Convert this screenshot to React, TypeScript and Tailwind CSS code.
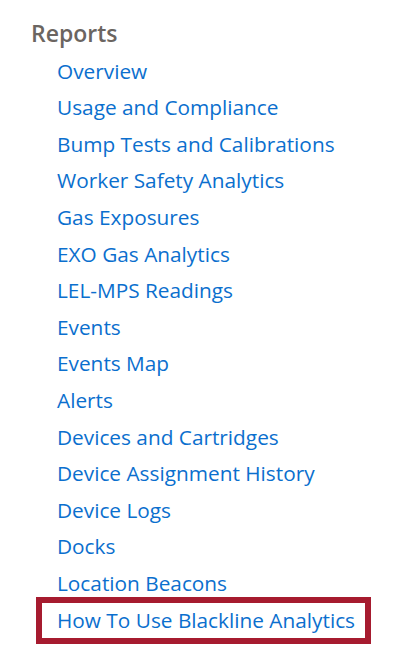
import React from 'react';

const reports = [
    'Overview',
    'Usage and Compliance',
    'Bump Tests and Calibrations',
    'Worker Safety Analytics',
    'Gas Exposures',
    'EXO Gas Analytics',
    'LEL-MPS Readings',
    'Events',
    'Events Map',
    'Alerts',
    'Devices and Cartridges',
    'Device Assignment History',
    'Device Logs',
    'Docks',
    'Location Beacons',
];

export default function App() {
    return (
        <div className="min-h-screen bg-white pt-[17px] pl-[31px]" style={{ fontFamily: '"Open Sans", "Noto Sans", sans-serif' }}>
            <h2 className="text-[23px] leading-[32px] font-semibold text-[#6b6561]">Reports</h2>
            <ul className="mt-[4px]">
                {reports.map((name) => (
                    <li key={name} className="pl-[26px] h-[36.6px] flex items-center">
                        <a href="#" className="text-[20.8px] text-[#0b6fce]">{name}</a>
                    </li>
                ))}
                <li className="-mt-[5px] ml-[5px] w-[335px] h-[47px] border-[6px] border-[#a61b2f] flex items-center pl-[15px]">
                    <a href="#" className="text-[20.8px] text-[#0b6fce]">How To Use Blackline Analytics</a>
                </li>
            </ul>
        </div>
    );
}
